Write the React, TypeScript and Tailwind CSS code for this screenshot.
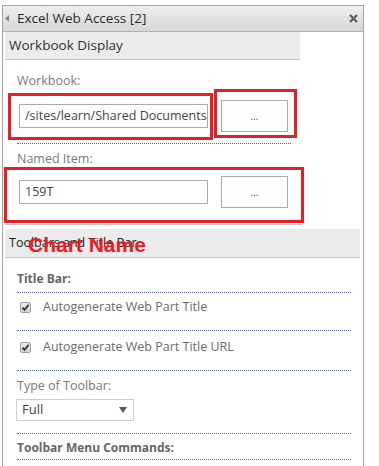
import React from 'react';

const Dotted: React.FC<{ className?: string }> = ({ className = '' }) => (
  <div className={`h-0 border-t border-dotted border-[#3f67d4] ${className}`} />
);

const Check: React.FC = () => (
  <div className="w-[11px] h-[11px] rounded-[2px] border border-[#a0a0a0] bg-gradient-to-b from-[#eeeeee] to-[#cfcfcf] flex items-center justify-center">
    <svg width="9" height="9" viewBox="0 0 9 9">
      <path d="M1.5 4.6 L3.6 6.8 L7.6 1.8" fill="none" stroke="#333" strokeWidth="1.8" />
    </svg>
  </div>
);

const DotsButton: React.FC = () => (
  <div className="w-[67px] h-[32px] border border-[#ababab] bg-[#fdfdfd] flex items-center justify-center text-[10px] leading-none text-[#555]">
    ...
  </div>
);

const App: React.FC = () => {
  return (
    <div
      className="w-[379px] h-[466px] bg-white overflow-hidden pl-[2px] pt-[5px]"
      style={{ fontFamily: '"Open Sans", "Noto Sans", sans-serif' }}
    >
      <div className="w-[362px] h-[470px] border-x border-t border-[#a3a3a3]">
        {/* web part header */}
        <div className="h-[26px] border-b border-[#b4b4b4] bg-gradient-to-b from-[#efefef] to-[#d7d7d7] flex items-center">
          <svg width="4" height="7" viewBox="0 0 4 7" className="ml-[2px]">
            <path d="M4 0 L0 3.5 L4 7 Z" fill="#8a8a8a" />
          </svg>
          <span className="ml-[8px] text-[13.5px] text-[#2b2b2b]">Excel Web Access [2]</span>
          <svg width="9" height="9" viewBox="0 0 9 9" className="ml-auto mr-[5px]">
            <path d="M1 1 L8 8 M8 1 L1 8" stroke="#616161" strokeWidth="2.2" />
          </svg>
        </div>

        {/* workbook display */}
        <div className="ml-[2px] w-[295px] h-[28px] bg-[#ececec] border-b border-[#c6c6c6] flex items-center pl-[4px] text-[13.5px] text-[#2f2f3f]">
          Workbook Display
        </div>

        <div className="ml-[14px] mt-[12px] text-[12.5px] leading-[17px] text-[#7a7a7a]">Workbook:</div>
        <div className="flex items-start">
          <div className="ml-[5px] mt-[4px] w-[205px] h-[47px] border-[3px] border-[#ec1c24] pl-[8px] pt-[8px]">
            <div className="w-[189px] h-[24px] border border-[#ababab] pl-[5px] text-[12.5px] leading-[22px] text-[#444] whitespace-nowrap overflow-hidden">
              /sites/learn/Shared Documents
            </div>
          </div>
          <div className="ml-[1px] w-[83px] h-[49px] border-[3px] border-[#ec1c24] pl-[4px] pt-[8px]">
            <DotsButton />
          </div>
        </div>
        <Dotted className="ml-[14px] mt-[3px] w-[274px]" />

        <div className="ml-[14px] mt-[6px] text-[12.5px] leading-[17px] text-[#7a7a7a]">Named Item:</div>
        <div className="ml-[1px] w-[300px] h-[56px] border-[3px] border-[#ec1c24] flex items-start pl-[12px]">
          <div className="mt-[10px] w-[189px] h-[24px] border border-[#ababab] pl-[5px] text-[12.5px] leading-[22px] text-[#444]">
            159T
          </div>
          <div className="ml-[13px] mt-[6px]">
            <DotsButton />
          </div>
        </div>
        <div className="ml-[2px] mt-[1px] w-[297px] h-[1px] bg-[#c6c6c6]" />

        {/* toolbars and title bar */}
        <div className="relative ml-[2px] mt-[4px] w-[355px] h-[29px] bg-[#ececec] border-b border-[#c6c6c6] flex items-center pl-[4px] text-[12.5px] text-[#1a1a1a]">
          Toolbars and Title Bar
          <span
            className="absolute left-[23px] top-[5px] text-[21px] leading-[21px] font-bold text-[#ec1c24]"
            style={{ fontFamily: '"Liberation Sans", Arial, sans-serif' }}
          >
            Chart Name
          </span>
        </div>

        <div className="ml-[14px] mt-[12px] text-[12px] leading-[18px] font-bold text-[#666]">Title Bar:</div>
        <Dotted className="ml-[14px] mt-[4px] w-[334px]" />
        <div className="ml-[17px] mt-[5px] h-[18px] flex items-center text-[12.5px] text-[#6a6a6a]">
          <Check />
          <span className="ml-[12px]">Autogenerate Web Part Title</span>
        </div>
        <Dotted className="ml-[14px] mt-[14px] w-[334px]" />
        <div className="ml-[17px] mt-[7px] h-[18px] flex items-center text-[12.5px] text-[#6a6a6a]">
          <Check />
          <span className="ml-[12px]">Autogenerate Web Part Title URL</span>
        </div>
        <Dotted className="ml-[14px] mt-[14px] w-[334px]" />

        <div className="ml-[14px] mt-[6px] text-[12.5px] leading-[18px] text-[#7a7a7a]">Type of Toolbar:</div>
        <div className="ml-[13px] mt-[4px] w-[118px] h-[22px] border border-[#cdcdcd] flex items-center pl-[5px] pr-[6px] text-[13px] text-[#444]">
          <span>Full</span>
          <svg width="8" height="6" viewBox="0 0 8 6" className="ml-auto">
            <path d="M0 0 L8 0 L4 6 Z" fill="#555" />
          </svg>
        </div>
        <Dotted className="ml-[14px] mt-[12px] w-[334px]" />

        <div className="ml-[14px] mt-[5px] text-[12px] leading-[18px] font-bold text-[#666]">Toolbar Menu Commands:</div>
        <Dotted className="ml-[14px] mt-[2px] w-[334px]" />
      </div>
    </div>
  );
};

export default App;
